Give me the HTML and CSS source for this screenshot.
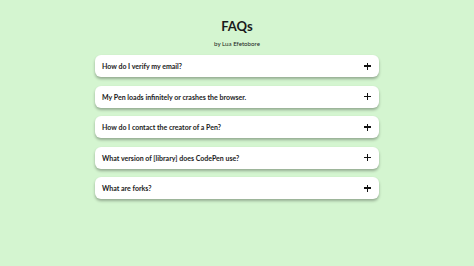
FILE: index.html
```html
<!DOCTYPE html>
<html>
<head>
<meta charset="utf-8">
<link rel="stylesheet" href="styles.css">
</head>
<body>
<main class="page">
  <h1 class="title">FAQs</h1>
  <p class="byline">by Lua Efetobore</p>
  <div class="list">
    <div class="item"><span class="q">How do I verify my email?</span><span class="plus"></span></div>
    <div class="item"><span class="q">My Pen loads infinitely or crashes the browser.</span><span class="plus"></span></div>
    <div class="item"><span class="q">How do I contact the creator of a Pen?</span><span class="plus"></span></div>
    <div class="item"><span class="q">What version of [library] does CodePen use?</span><span class="plus"></span></div>
    <div class="item"><span class="q">What are forks?</span><span class="plus"></span></div>
  </div>
</main>
</body>
</html>
```
FILE: styles.css
```css
html, body {
  margin: 0;
  padding: 0;
}
body {
  background: #d4f5d0;
  font-family: Lato, "Liberation Sans", sans-serif;
  color: #1a1a1a;
  height: 266px;
}
.page {
  width: 284px;
  margin: 0 auto;
  padding-top: 18px;
  display: flex;
  flex-direction: column;
  align-items: stretch;
}
.title {
  margin: 0;
  text-align: center;
  font-size: 13px;
  font-weight: 700;
  line-height: 16px;
}
.byline {
  margin: 6px 0 0;
  text-align: center;
  font-size: 6.2px;
  line-height: 8px;
}
.list {
  margin-top: 7px;
  display: flex;
  flex-direction: column;
  gap: 8.5px;
}
.item {
  background: #fff;
  border-radius: 6px;
  height: 22px;
  box-shadow: 0 2px 3px rgba(0,0,0,0.3);
  display: flex;
  align-items: center;
  justify-content: space-between;
  padding: 0 8px 0 7px;
}
.q {
  font-size: 7px;
  font-weight: 700;
}
.plus {
  width: 7px;
  height: 7px;
  position: relative;
}
.plus::before, .plus::after {
  content: "";
  position: absolute;
  background: #111;
}
.plus::before {
  left: 0; right: 0; top: 2.75px; height: 1.5px;
}
.plus::after {
  top: 0; bottom: 0; left: 2.75px; width: 1.5px;
}
```
